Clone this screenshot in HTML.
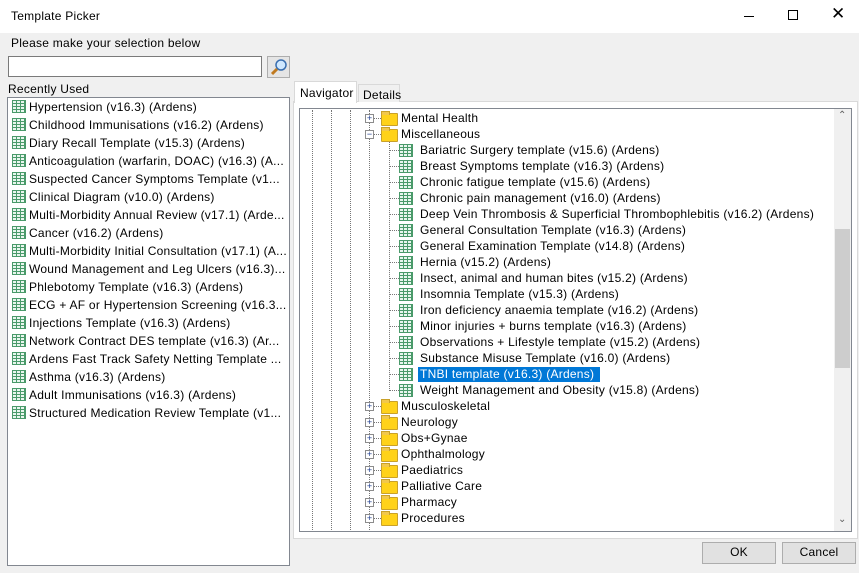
<!DOCTYPE html>
<html><head><style>
*{margin:0;padding:0;box-sizing:border-box}
body{width:859px;height:573px;background:#f0f0f0;font-family:"Liberation Sans",Tahoma,sans-serif;font-size:12px;color:#000;position:relative;overflow:hidden;letter-spacing:0.25px}
.a{position:absolute;white-space:nowrap}
.g{position:absolute;width:14px;height:13px;border:1px solid #4a9a6a;background:
repeating-linear-gradient(90deg,transparent 0 3px,#4a9a6a 3px 4px),repeating-linear-gradient(0deg,transparent 0 2px,#4a9a6a 2px 3px),#e8f6ee}
.f{position:absolute;width:17px;height:13px;background:#ffd21a;border:1px solid #c9a12a;border-radius:1px}
.f:before{content:"";position:absolute;left:-1px;top:-3px;width:7px;height:3px;background:#f2c84b;border:1px solid #c9a12a;border-bottom:none}
.p{position:absolute;width:9px;height:9px;border:1px solid #8c8c8c;background:#fff;font-size:9px;line-height:7px;text-align:center;color:#1b3a8c;letter-spacing:0}
.hd{position:absolute;border-top:1px dotted #777;height:0}
.vd{position:absolute;border-left:1px dotted #777;width:0}
.btn{position:absolute;background:#e1e1e1;border:1px solid #adadad;text-align:center;line-height:19px}
</style></head><body>
<div class="a" style="left:0;top:0;width:859px;height:33px;background:#fff"></div>
<div class="a" style="left:11px;top:9px">Template Picker</div>
<div class="a" style="left:744px;top:16px;width:10px;border-top:1px solid #000"></div>
<div class="a" style="left:788px;top:10px;width:10px;height:10px;border:1px solid #000"></div>
<div class="a" style="left:831px;top:4px;font-size:17px">✕</div>
<div class="a" style="left:11px;top:36px">Please make your selection below</div>
<div class="a" style="left:8px;top:56px;width:254px;height:21px;background:#fff;border:1px solid #7a7a7a"></div>
<div class="a" style="left:267px;top:56px;width:23px;height:22px;background:#e5e5e5;border:1px solid #adadad"></div>
<svg class="a" style="left:270px;top:58px" width="18" height="18"><circle cx="11" cy="7" r="5" fill="#cfe8ff" stroke="#3a6fb0" stroke-width="1.5"/><line x1="7" y1="11" x2="2" y2="16" stroke="#c07a20" stroke-width="3"/></svg>
<div class="a" style="left:8px;top:82px">Recently Used</div>
<div class="a" style="left:7px;top:97px;width:283px;height:469px;background:#fff;border:1px solid #828790"></div>
<div class="g" style="left:12px;top:100px"></div><div class="a" style="left:29px;top:100px">Hypertension (v16.3) (Ardens)</div>
<div class="g" style="left:12px;top:118px"></div><div class="a" style="left:29px;top:118px">Childhood Immunisations (v16.2) (Ardens)</div>
<div class="g" style="left:12px;top:136px"></div><div class="a" style="left:29px;top:136px">Diary Recall Template (v15.3) (Ardens)</div>
<div class="g" style="left:12px;top:154px"></div><div class="a" style="left:29px;top:154px">Anticoagulation (warfarin, DOAC) (v16.3) (A...</div>
<div class="g" style="left:12px;top:172px"></div><div class="a" style="left:29px;top:172px">Suspected Cancer Symptoms Template (v1...</div>
<div class="g" style="left:12px;top:190px"></div><div class="a" style="left:29px;top:190px">Clinical Diagram (v10.0) (Ardens)</div>
<div class="g" style="left:12px;top:208px"></div><div class="a" style="left:29px;top:208px">Multi-Morbidity Annual Review (v17.1) (Arde...</div>
<div class="g" style="left:12px;top:226px"></div><div class="a" style="left:29px;top:226px">Cancer (v16.2) (Ardens)</div>
<div class="g" style="left:12px;top:244px"></div><div class="a" style="left:29px;top:244px">Multi-Morbidity Initial Consultation (v17.1) (A...</div>
<div class="g" style="left:12px;top:262px"></div><div class="a" style="left:29px;top:262px">Wound Management and Leg Ulcers (v16.3)...</div>
<div class="g" style="left:12px;top:280px"></div><div class="a" style="left:29px;top:280px">Phlebotomy Template (v16.3) (Ardens)</div>
<div class="g" style="left:12px;top:298px"></div><div class="a" style="left:29px;top:298px">ECG + AF or Hypertension Screening (v16.3...</div>
<div class="g" style="left:12px;top:316px"></div><div class="a" style="left:29px;top:316px">Injections Template (v16.3) (Ardens)</div>
<div class="g" style="left:12px;top:334px"></div><div class="a" style="left:29px;top:334px">Network Contract DES template (v16.3) (Ar...</div>
<div class="g" style="left:12px;top:352px"></div><div class="a" style="left:29px;top:352px">Ardens Fast Track Safety Netting Template ...</div>
<div class="g" style="left:12px;top:370px"></div><div class="a" style="left:29px;top:370px">Asthma (v16.3) (Ardens)</div>
<div class="g" style="left:12px;top:388px"></div><div class="a" style="left:29px;top:388px">Adult Immunisations (v16.3) (Ardens)</div>
<div class="g" style="left:12px;top:406px"></div><div class="a" style="left:29px;top:406px">Structured Medication Review Template (v1...</div>

<div class="a" style="left:293px;top:101px;width:565px;height:438px;background:#fff;border:1px solid #d9d9d9"></div>
<div class="a" style="left:294px;top:81px;width:63px;height:22px;background:#fff;border:1px solid #d9d9d9;border-bottom:none"></div>
<div class="a" style="left:300px;top:86px">Navigator</div>
<div class="a" style="left:358px;top:84px;width:42px;height:18px;background:#f0f0f0;border:1px solid #d9d9d9;border-bottom:none"></div>
<div class="a" style="left:363px;top:88px">Details</div>
<div class="a" style="left:299px;top:108px;width:553px;height:424px;background:#fff;border:1px solid #828790"></div>
<div class="a" style="left:834px;top:109px;width:17px;height:422px;background:#f0f0f0"></div>
<div class="a" style="left:835px;top:229px;width:15px;height:139px;background:#cdcdcd"></div>
<div class="a" style="left:838px;top:110px;font-size:10px;color:#606060">⌃</div>
<div class="a" style="left:838px;top:514px;font-size:10px;color:#606060">⌄</div>

<div class="vd" style="left:312px;top:110px;height:420px"></div>
<div class="vd" style="left:331px;top:110px;height:420px"></div>
<div class="vd" style="left:350px;top:110px;height:420px"></div>
<div class="vd" style="left:369px;top:110px;height:420px"></div>
<div class="vd" style="left:389px;top:139px;height:252px"></div>

<div class="hd" style="left:374px;top:118px;width:7px"></div><div class="p" style="left:365px;top:114px">+</div><div class="f" style="left:381px;top:113px"></div><div class="a" style="left:401px;top:111px">Mental Health</div>
<div class="hd" style="left:374px;top:134px;width:7px"></div><div class="p" style="left:365px;top:130px">−</div><div class="f" style="left:381px;top:129px"></div><div class="a" style="left:401px;top:127px">Miscellaneous</div>

<div class="hd" style="left:390px;top:150px;width:9px"></div><div class="g" style="left:399px;top:144px"></div><div class="a" style="left:420px;top:143px">Bariatric Surgery template (v15.6) (Ardens)</div>
<div class="hd" style="left:390px;top:166px;width:9px"></div><div class="g" style="left:399px;top:160px"></div><div class="a" style="left:420px;top:159px">Breast Symptoms template (v16.3) (Ardens)</div>
<div class="hd" style="left:390px;top:182px;width:9px"></div><div class="g" style="left:399px;top:176px"></div><div class="a" style="left:420px;top:175px">Chronic fatigue template (v15.6) (Ardens)</div>
<div class="hd" style="left:390px;top:198px;width:9px"></div><div class="g" style="left:399px;top:192px"></div><div class="a" style="left:420px;top:191px">Chronic pain management (v16.0) (Ardens)</div>
<div class="hd" style="left:390px;top:214px;width:9px"></div><div class="g" style="left:399px;top:208px"></div><div class="a" style="left:420px;top:207px">Deep Vein Thrombosis &amp; Superficial Thrombophlebitis (v16.2) (Ardens)</div>
<div class="hd" style="left:390px;top:230px;width:9px"></div><div class="g" style="left:399px;top:224px"></div><div class="a" style="left:420px;top:223px">General Consultation Template (v16.3) (Ardens)</div>
<div class="hd" style="left:390px;top:246px;width:9px"></div><div class="g" style="left:399px;top:240px"></div><div class="a" style="left:420px;top:239px">General Examination Template (v14.8) (Ardens)</div>
<div class="hd" style="left:390px;top:262px;width:9px"></div><div class="g" style="left:399px;top:256px"></div><div class="a" style="left:420px;top:255px">Hernia (v15.2) (Ardens)</div>
<div class="hd" style="left:390px;top:278px;width:9px"></div><div class="g" style="left:399px;top:272px"></div><div class="a" style="left:420px;top:271px">Insect, animal and human bites (v15.2) (Ardens)</div>
<div class="hd" style="left:390px;top:294px;width:9px"></div><div class="g" style="left:399px;top:288px"></div><div class="a" style="left:420px;top:287px">Insomnia Template (v15.3) (Ardens)</div>
<div class="hd" style="left:390px;top:310px;width:9px"></div><div class="g" style="left:399px;top:304px"></div><div class="a" style="left:420px;top:303px">Iron deficiency anaemia template (v16.2) (Ardens)</div>
<div class="hd" style="left:390px;top:326px;width:9px"></div><div class="g" style="left:399px;top:320px"></div><div class="a" style="left:420px;top:319px">Minor injuries + burns template (v16.3) (Ardens)</div>
<div class="hd" style="left:390px;top:342px;width:9px"></div><div class="g" style="left:399px;top:336px"></div><div class="a" style="left:420px;top:335px">Observations + Lifestyle template (v15.2) (Ardens)</div>
<div class="hd" style="left:390px;top:358px;width:9px"></div><div class="g" style="left:399px;top:352px"></div><div class="a" style="left:420px;top:351px">Substance Misuse Template (v16.0) (Ardens)</div>
<div class="hd" style="left:390px;top:374px;width:9px"></div><div class="g" style="left:399px;top:368px"></div><div class="a" style="left:418px;top:367px;width:182px;height:15px;background:#0078d7"></div><div class="a" style="left:420px;top:367px;color:#fff">TNBI template (v16.3) (Ardens)</div>
<div class="hd" style="left:390px;top:390px;width:9px"></div><div class="g" style="left:399px;top:384px"></div><div class="a" style="left:420px;top:383px">Weight Management and Obesity (v15.8) (Ardens)</div>

<div class="hd" style="left:374px;top:406px;width:7px"></div><div class="p" style="left:365px;top:402px">+</div><div class="f" style="left:381px;top:401px"></div><div class="a" style="left:401px;top:399px">Musculoskeletal</div>
<div class="hd" style="left:374px;top:422px;width:7px"></div><div class="p" style="left:365px;top:418px">+</div><div class="f" style="left:381px;top:417px"></div><div class="a" style="left:401px;top:415px">Neurology</div>
<div class="hd" style="left:374px;top:438px;width:7px"></div><div class="p" style="left:365px;top:434px">+</div><div class="f" style="left:381px;top:433px"></div><div class="a" style="left:401px;top:431px">Obs+Gynae</div>
<div class="hd" style="left:374px;top:454px;width:7px"></div><div class="p" style="left:365px;top:450px">+</div><div class="f" style="left:381px;top:449px"></div><div class="a" style="left:401px;top:447px">Ophthalmology</div>
<div class="hd" style="left:374px;top:470px;width:7px"></div><div class="p" style="left:365px;top:466px">+</div><div class="f" style="left:381px;top:465px"></div><div class="a" style="left:401px;top:463px">Paediatrics</div>
<div class="hd" style="left:374px;top:486px;width:7px"></div><div class="p" style="left:365px;top:482px">+</div><div class="f" style="left:381px;top:481px"></div><div class="a" style="left:401px;top:479px">Palliative Care</div>
<div class="hd" style="left:374px;top:502px;width:7px"></div><div class="p" style="left:365px;top:498px">+</div><div class="f" style="left:381px;top:497px"></div><div class="a" style="left:401px;top:495px">Pharmacy</div>
<div class="hd" style="left:374px;top:518px;width:7px"></div><div class="p" style="left:365px;top:514px">+</div><div class="f" style="left:381px;top:513px"></div><div class="a" style="left:401px;top:511px">Procedures</div>

<div class="btn" style="left:702px;top:542px;width:74px;height:22px">OK</div>
<div class="btn" style="left:782px;top:542px;width:74px;height:22px">Cancel</div>
</body></html>
